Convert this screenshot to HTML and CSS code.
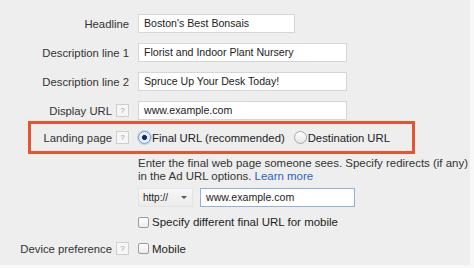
FILE: index.html
```html
<!DOCTYPE html>
<html>
<head>
<meta charset="utf-8">
<link rel="stylesheet" href="styles.css">
</head>
<body>
<div class="panel">
  <div class="row">
    <div class="label">Headline</div>
    <div class="field"><div class="input w-short">Boston's Best Bonsais</div></div>
  </div>
  <div class="row">
    <div class="label">Description line 1</div>
    <div class="field"><div class="input w-long">Florist and Indoor Plant Nursery</div></div>
  </div>
  <div class="row">
    <div class="label">Description line 2</div>
    <div class="field"><div class="input w-long">Spruce Up Your Desk Today!</div></div>
  </div>
  <div class="row">
    <div class="label">Display URL <span class="help">?</span></div>
    <div class="field"><div class="input w-long">www.example.com</div></div>
  </div>
  <div class="row highlight">
    <div class="label">Landing page <span class="help">?</span></div>
    <div class="field options">
      <span class="opt"><span class="radio checked"></span>Final URL (recommended)</span>
      <span class="opt"><span class="radio"></span>Destination URL</span>
    </div>
  </div>
  <div class="block">
    <p class="desc">Enter the final web page someone sees. Specify redirects (if any)<br>in the Ad URL options. <span class="link">Learn more</span></p>
    <div class="urlrow">
      <div class="select">http://<span class="caret"></span></div>
      <div class="input focus w-url">www.example.com</div>
    </div>
    <div class="check"><span class="box"></span>Specify different final URL for mobile</div>
  </div>
  <div class="row device">
    <div class="label">Device preference <span class="help">?</span></div>
    <div class="field"><div class="check"><span class="box"></span>Mobile</div></div>
  </div>
</div>
</body>
</html>
```
FILE: styles.css
```css
html, body {
  margin: 0;
  padding: 0;
  background: #f8f8f8;
}
body {
  font-family: "Liberation Sans", Arial, Helvetica, sans-serif;
  color: #333;
  font-size: 11px;
}
.panel {
  width: 470px;
  height: 265px;
  background: #eeeeee;
  box-sizing: border-box;
  padding-top: 14px;
}
.row {
  display: flex;
  align-items: center;
  height: 19px;
  margin-bottom: 10px;
}
.label {
  width: 129px;
  display: flex;
  justify-content: flex-end;
  align-items: center;
  white-space: nowrap;
  color: #333;
  font-size: 11.3px;
}
.help {
  display: inline-block;
  width: 11px;
  height: 11px;
  margin-left: 4px;
  border: 1px solid #cfcfcf;
  background: #f6f6f6;
  color: #9a9a9a;
  font-size: 8px;
  line-height: 11px;
  text-align: center;
  box-sizing: content-box;
}
.field {
  margin-left: 9px;
  display: flex;
  align-items: center;
}
.input {
  height: 19px;
  box-sizing: border-box;
  border: 1px solid #d6d6d6;
  background: #fff;
  padding-left: 5px;
  font-size: 10.6px;
  line-height: 17px;
  color: #222;
  white-space: nowrap;
}
.w-short { width: 157px; }
.w-long { width: 209px; }
.w-url { width: 155px; }
.input.focus { border-color: #8fb2dd; }
.highlight {
  margin-left: 28px;
  width: 387px;
  height: 33px;
  border: 3px solid #e8542c;
  box-sizing: border-box;
  margin-top: -9px;
  margin-bottom: 0;
}
.highlight .label { width: 98px; }
.opt {
  display: inline-flex;
  align-items: center;
  color: #222;
  font-size: 11.3px;
}
.opt + .opt { margin-left: 9px; }
.radio {
  display: inline-block;
  width: 11px;
  height: 11px;
  border: 1px solid #a8a8a8;
  border-radius: 50%;
  background: linear-gradient(#ffffff, #e6e6e6);
  margin-right: 1px;
}
.radio.checked {
  border-color: #6d9bd6;
  box-shadow: 0 0 0 1px #bcd3f0;
  background: radial-gradient(circle, #1d2f4f 0 2.2px, #dde8f6 2.8px, #f7faff 100%);
}
.block {
  margin-left: 138px;
  margin-top: 3px;
}
.desc {
  margin: 0;
  font-size: 11.45px;
  line-height: 12.5px;
  color: #333;
  white-space: nowrap;
}
.link { color: #2a62c3; }
.urlrow {
  display: flex;
  align-items: center;
  margin-top: 6px;
}
.select {
  width: 55px;
  height: 19px;
  box-sizing: border-box;
  background: linear-gradient(#f7f7f7, #ebebeb);
  border: 1px solid #e3e3e3;
  font-size: 10px;
  line-height: 17px;
  padding-left: 4px;
  color: #222;
  position: relative;
  margin-right: 7px;
}
.caret {
  position: absolute;
  right: 5px;
  top: 7px;
  width: 0;
  height: 0;
  border-left: 3px solid transparent;
  border-right: 3px solid transparent;
  border-top: 3px solid #555;
}
.check {
  display: flex;
  align-items: center;
  font-size: 11.5px;
  color: #222;
  margin-top: 8px;
  height: 14px;
}
.check .box {
  display: inline-block;
  width: 9px;
  height: 9px;
  border: 1px solid #9c9c9c;
  border-radius: 2px;
  background: linear-gradient(#ffffff, #ececec);
  margin-right: 3px;
}
.device {
  margin-top: 10px;
}
.device .check { margin-top: 0; }
```
